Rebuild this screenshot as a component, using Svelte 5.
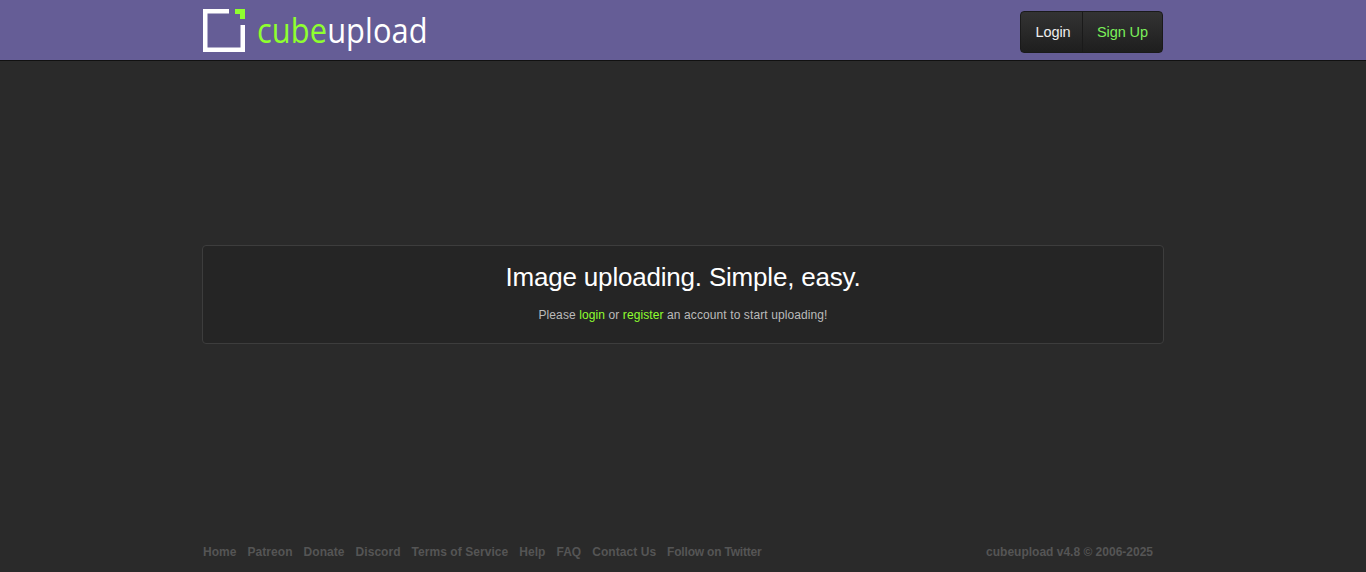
<script>
    const links = ['Home', 'Patreon', 'Donate', 'Discord', 'Terms of Service', 'Help', 'FAQ', 'Contact Us', 'Follow on Twitter'];
</script>

<div class="page">
    <header class="topbar">
        <div class="container topbar-inner">
            <a class="logo" href="#home">
                <svg width="42" height="43" viewBox="0 0 42 43" aria-hidden="true">
                    <path d="M0 0H26V4.5H4.5V38.5H37.5V16H42V43H0Z" fill="#fff" />
                    <path d="M32 0H42V10H37V5H32Z" fill="#8fff2f" />
                </svg>
                <span class="wordmark"><span class="green">cube</span>upload</span>
            </a>
            <div class="btn-group">
                <a class="btn" href="#login">Login</a>
                <a class="btn signup" href="#signup">Sign Up</a>
            </div>
        </div>
    </header>

    <main class="content">
        <section class="well">
            <h1>Image uploading. Simple, easy.</h1>
            <p>Please <a href="#login">login</a> or <a href="#register">register</a> an account to start uploading!</p>
        </section>
    </main>

    <footer class="container footer">
        <nav>
            {#each links as link}
                <a href="#x">{link}</a>
            {/each}
        </nav>
        <span class="version">cubeupload v4.8 © 2006-2025</span>
    </footer>
</div>

<style>
    :global(body) {
        margin: 0;
        background: #2a2a2a;
        font-family: "Liberation Sans", Arial, sans-serif;
    }

    .page {
        height: 572px;
        display: flex;
        flex-direction: column;
        overflow: hidden;
    }

    .container {
        width: 960px;
        margin: 0 auto;
        box-sizing: border-box;
    }

    .topbar {
        height: 61px;
        box-sizing: border-box;
        flex: none;
        background: #655d96;
        border-bottom: 1px solid #111;
    }

    .topbar-inner {
        display: flex;
        justify-content: space-between;
        align-items: flex-start;
        height: 60px;
        padding-top: 9px;
    }

    .logo {
        display: flex;
        align-items: center;
        gap: 12px;
        text-decoration: none;
        color: #fff;
    }

    .wordmark {
        font-family: "Open Sans", sans-serif;
        font-size: 35px;
        line-height: 42px;
        font-weight: 400;
        letter-spacing: 0.1px;
        transform: scaleX(0.88);
        transform-origin: left center;
        margin-top: -2px;
    }

    .green {
        color: #8fff2f;
    }

    .btn-group {
        display: flex;
        height: 42px;
        box-sizing: border-box;
        margin-top: 2px;
        border: 1px solid #1a1a1a;
        border-radius: 4px;
        overflow: hidden;
        background: linear-gradient(#333, #1e1e1e);
    }

    .btn {
        display: flex;
        align-items: center;
        width: 61px;
        padding-left: 3px;
        box-sizing: border-box;
        justify-content: center;
        font-size: 14.5px;
        letter-spacing: -0.1px;
        color: #eee;
        text-decoration: none;
    }

    .signup {
        width: 80px;
        padding-left: 0;
        color: #7bf05a;
        border-left: 1px solid #1a1a1a;
    }

    .content {
        flex: 1;
        display: flex;
        align-items: center;
        justify-content: center;
    }

    .well {
        width: 962px;
        height: 99px;
        box-sizing: border-box;
        margin-top: -4px;
        background: #252525;
        border: 1px solid #3d3d3d;
        border-radius: 4px;
        text-align: center;
        padding-top: 16px;
    }

    h1 {
        margin: 0;
        font-size: 26px;
        font-weight: 400;
        line-height: 30px;
        letter-spacing: -0.2px;
        color: #fff;
    }

    p {
        margin: 14px 0 0;
        font-size: 12px;
        line-height: 18px;
        letter-spacing: 0.1px;
        color: #bbb;
    }

    p a {
        color: #8fff2f;
        text-decoration: none;
    }

    .footer {
        display: flex;
        justify-content: space-between;
        height: 41px;
        flex: none;
        padding: 12px 10px 0 0;
        font-size: 12px;
        font-weight: 700;
        line-height: 18px;
        color: #555;
    }

    nav {
        display: flex;
        gap: 11px;
    }

    nav a {
        color: #555;
        text-decoration: none;
        letter-spacing: 0.05px;
    }

    nav a:last-child {
        letter-spacing: -0.2px;
    }
</style>
